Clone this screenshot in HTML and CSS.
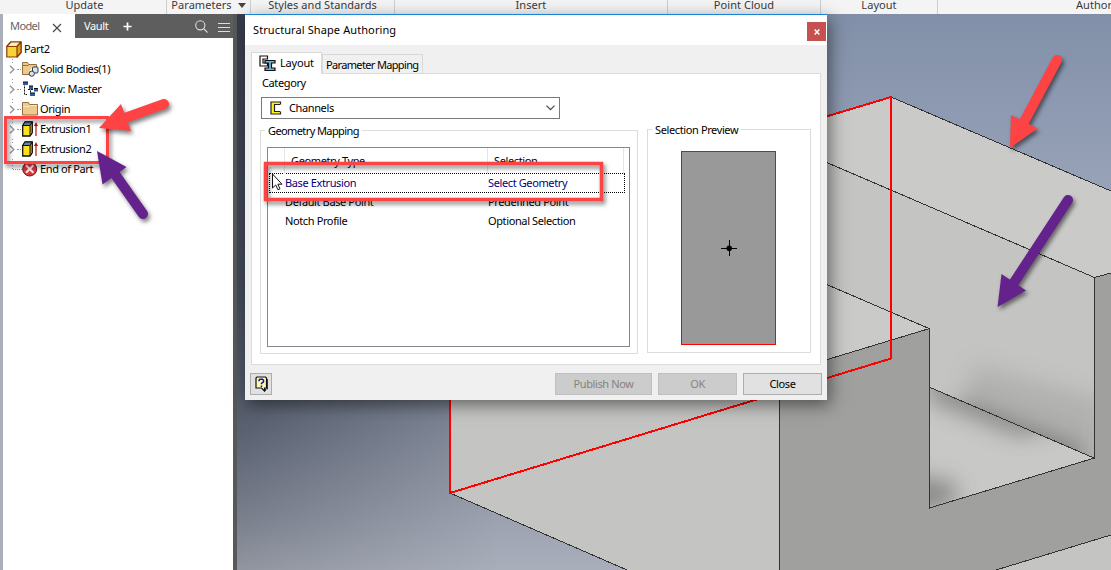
FILE: index.html
```html
<!DOCTYPE html>
<html lang="en">
<head>
    <meta charset="UTF-8">
    <meta name="viewport" content="width=device-width, initial-scale=1.0">
    <title>Structural Shape Authoring</title>
    <link rel="stylesheet" href="styles.css">
</head>
<body>
    <div class="ribbon">
        <div class="panel update">Update</div>
        <div class="panel parameters">Parameters <span class="caret"></span></div>
        <div class="panel styles">Styles and Standards</div>
        <div class="panel insert">Insert</div>
        <div class="panel cloud">Point Cloud</div>
        <div class="panel layout">Layout</div>
        <div class="panel author">Author</div>
    </div>

    <div class="main">
        <div class="browser">
            <div class="browser-tabs">
                <div class="browser-tab active">
                    <span>Model</span>
                    <svg width="10" height="10" viewBox="0 0 10 10"><path d="M1 1l8 8M9 1l-8 8" stroke="#444" stroke-width="1.1"/></svg>
                </div>
                <div class="browser-tab">Vault</div>
                <svg class="plus" width="9" height="9" viewBox="0 0 9 9"><path d="M4.5 0.5v8M0.5 4.5h8" stroke="#fff" stroke-width="1.7"/></svg>
                <svg class="search" width="13" height="13" viewBox="0 0 13 13" fill="none" stroke="#ddd" stroke-width="1.1"><circle cx="5.3" cy="5.3" r="4.6"/><path d="M8.7 8.7l3.8 3.8"/></svg>
                <svg class="menu" width="13" height="11" viewBox="0 0 13 11"><path d="M0 1.5h12M0 5.5h12M0 9.5h12" stroke="#ddd"/></svg>
            </div>
            <ul class="tree">
                <li class="root">
                    <svg width="16" height="17" viewBox="0 0 16 17" stroke="#8a3a08" stroke-width="1.2" stroke-linejoin="round">
                        <path d="M0.8 5.5L4.8 1H15v10.5l-4 4.5H0.8z" fill="#f6d437"/>
                        <path d="M0.8 5.5L4.8 1H15l-4 4.5z" fill="#fff3b0"/>
                        <path d="M11 5.5L15 1v10.5L11 16z" fill="#e0a41c"/>
                    </svg>
                    <span>Part2</span>
                </li>
                <li>
                    <svg class="chevron" width="6" height="9" viewBox="0 0 6 9"><path d="M1 0.7l3.8 3.8L1 8.3"/></svg><i></i>
                    <svg width="17" height="16" viewBox="0 0 17 16">
                        <path d="M0.5 13.5V1.5h5l1 2h8v10z" fill="#ecc98d" stroke="#93713c"/>
                        <path d="M0.5 4.5h6" stroke="#93713c"/>
                        <path d="M9 8l2-2h5.5v6l-2 2h-4l-2 1.5-1-2v-3z" fill="#fff"/>
                        <rect x="10.5" y="6" width="5.5" height="6" rx="1" fill="#d6e3f0" stroke="#333c4a"/>
                        <circle cx="9.8" cy="12.7" r="2.6" fill="#d6e3f0" stroke="#333c4a"/>
                    </svg>
                    <span>Solid Bodies(1)</span>
                </li>
                <li>
                    <svg class="chevron" width="6" height="9" viewBox="0 0 6 9"><path d="M1 0.7l3.8 3.8L1 8.3"/></svg><i></i>
                    <svg width="17" height="16" viewBox="0 0 17 16">
                        <path d="M5.5 2.5H2.5v11H5M8.5 6.5v7M6 8.5h7" fill="none" stroke="#111" stroke-dasharray="2 1"/>
                        <path d="M1 1h5v3H1zM7 5h4v3H7zM12 7.5h4v3h-4zM8 12h5v3H8z" fill="#2c5d94"/>
                        <path d="M1 1h5M7 5h4M12 7.5h4M8 12h5" stroke="#111"/>
                    </svg>
                    <span>View: Master</span>
                </li>
                <li>
                    <svg class="chevron" width="6" height="9" viewBox="0 0 6 9"><path d="M1 0.7l3.8 3.8L1 8.3"/></svg><i></i>
                    <svg width="17" height="16" viewBox="0 0 17 16">
                        <path d="M0.5 14V1.5h6l1 2h8V14z" fill="#edcb90" stroke="#93713c"/>
                        <path d="M1 5.5h6l1-1h7" fill="none" stroke="#fae8c4"/>
                    </svg>
                    <span>Origin</span>
                </li>
                <li>
                    <svg class="chevron" width="6" height="9" viewBox="0 0 6 9"><path d="M1 0.7l3.8 3.8L1 8.3"/></svg><i></i>
                    <svg width="17" height="16" viewBox="0 0 17 16">
                        <path d="M0.7 4.5L3 1h7.3v10.5L8 15H0.7z" fill="#ffe01f" stroke="#111" stroke-width="1.3"/>
                        <path d="M0.7 4.5L3 1h7.3L8 4.5z" fill="#5f86ad" stroke="#111"/>
                        <path d="M8 4.5L10.3 1v10.5L8 15z" fill="#c79d10" stroke="#111"/>
                        <path d="M14 15V3" stroke="#b80d10" stroke-width="1.2"/><path d="M12 5l2-4 2 4z" fill="#b80d10"/>
                    </svg>
                    <span>Extrusion1</span>
                </li>
                <li>
                    <svg class="chevron" width="6" height="9" viewBox="0 0 6 9"><path d="M1 0.7l3.8 3.8L1 8.3"/></svg><i></i>
                    <svg width="17" height="16" viewBox="0 0 17 16">
                        <path d="M0.7 4.5L3 1h7.3v10.5L8 15H0.7z" fill="#ffe01f" stroke="#111" stroke-width="1.3"/>
                        <path d="M0.7 4.5L3 1h7.3L8 4.5z" fill="#5f86ad" stroke="#111"/>
                        <path d="M8 4.5L10.3 1v10.5L8 15z" fill="#c79d10" stroke="#111"/>
                        <path d="M14 15V3" stroke="#b80d10" stroke-width="1.2"/><path d="M12 5l2-4 2 4z" fill="#b80d10"/>
                    </svg>
                    <span>Extrusion2</span>
                </li>
                <li class="last">
                    <i></i>
                    <svg width="17" height="16" viewBox="0 0 17 16">
                        <circle cx="7.7" cy="8" r="7" fill="#d8343a" stroke="#6d1a1c"/>
                        <path d="M4 4.3l7.4 7.4M11.4 4.3L4 11.7" stroke="#fbe6e6" stroke-width="2.2"/>
                    </svg>
                    <span>End of Part</span>
                </li>
            </ul>
        </div>

        <svg class="scene" width="874" height="556" viewBox="237 14 874 556">
            <defs>
                <linearGradient id="sky" x1="0" y1="0" x2="0" y2="1">
                    <stop offset="0" stop-color="#8190a8"/>
                    <stop offset="0.33" stop-color="#99a3b9"/>
                    <stop offset="0.7" stop-color="#808796"/>
                    <stop offset="1" stop-color="#a9aebb"/>
                </linearGradient>
                <linearGradient id="skyLeft" x1="0" y1="0" x2="0" y2="1">
                    <stop offset="0" stop-color="#363c4a"/>
                    <stop offset="0.5" stop-color="#434a58"/>
                    <stop offset="0.75" stop-color="#596070"/>
                    <stop offset="0.9" stop-color="#777d8a"/>
                    <stop offset="1" stop-color="#90959f"/>
                </linearGradient>
                <linearGradient id="fade" x1="0" y1="0" x2="1" y2="0">
                    <stop offset="0" stop-color="#fff"/>
                    <stop offset="1" stop-color="#000"/>
                </linearGradient>
                <mask id="leftMask"><rect x="237" y="14" width="260" height="556" fill="url(#fade)"/></mask>
                <clipPath id="wall"><path d="M929 200L1094 277V458L929 387z"/></clipPath>
                <clipPath id="floor"><path d="M929 387L1094 458L929 508z"/></clipPath>
                <filter id="soft" x="-50%" y="-100%" width="200%" height="300%"><feGaussianBlur stdDeviation="11"/></filter>
            </defs>
            <rect x="237" y="14" width="874" height="556" fill="url(#sky)"/>
            <rect x="237" y="14" width="260" height="556" fill="url(#skyLeft)" mask="url(#leftMask)"/>

            <!-- side and top faces -->
            <path d="M450 230L891 97L1111 191V570H627L450 493z" fill="#c4c4c2"/>
            <path d="M779 131L891 97L1111 191V273L1094 277.5L779 142z" fill="#cacac8"/>
            <path d="M779 264L929 328.5L779 374z" fill="#cacac8"/>

            <!-- slot -->
            <g clip-path="url(#wall)">
                <path d="M975 365L1105 400V480H1060L955 420z" fill="#8e8e8c" opacity="0.35" filter="url(#soft)"/>
                <path d="M960 401L1080 446V485L960 430z" fill="#747472" opacity="0.8" filter="url(#soft)"/>
            </g>
            <g clip-path="url(#floor)">
                <path d="M929 387L1094 458L929 508z" fill="#c8c8c6"/>
                <path d="M929 372L1060 425L1020 436L929 400z" fill="#7a7a78" opacity="0.8" filter="url(#soft)"/>
                <ellipse cx="928" cy="494" rx="30" ry="15" fill="#737371" opacity="0.8" filter="url(#soft)"/>
            </g>

            <!-- front face -->
            <path d="M779.5 374L929.5 328.5V508L1094.5 458V277.5L1111 273V535L996 570H779.5z" fill="#a0a09e"/>
            <g fill="none" stroke="#333" shape-rendering="crispEdges">
                <path d="M891 97L1111 191M779 142L1094.5 277.5L1111 273M779 264L929 328.5"/>
                <path d="M779.5 570V374L929.5 328.5V508L1094.5 458V277.5M929 387L1094 458"/>
                <path d="M1111 535L996 570M450 493L627 570"/>
            </g>
            <path d="M450 493V230L891 97V358.5z" fill="none" stroke="#fe0000" stroke-width="2" shape-rendering="crispEdges"/>
        </svg>
    </div>

    <div class="dialog">
        <div class="titlebar">
            <span>Structural Shape Authoring</span>
            <button class="close-x"><svg width="6" height="6" viewBox="0 0 6 6"><path d="M0.7 0.5l4.6 5M5.3 0.5l-4.6 5" stroke="#fff" stroke-width="1.5"/></svg></button>
        </div>
        <div class="tabs">
            <div class="tab active">
                <svg width="17" height="17" viewBox="0 0 17 17">
                    <path d="M8.5 1H1v10h7.5V8H4V4h4.5z" fill="#fff" stroke="#111" stroke-width="1.2"/>
                    <path d="M6 5.5h10v2.5h-3.5v5H16v2.5H6V13h3.5V8H6z" fill="#6db5e8" stroke="#111" stroke-width="1.2"/>
                </svg>
                <span>Layout</span>
            </div>
            <div class="tab mapping">Parameter Mapping</div>
        </div>
        <div class="page">
            <div class="category">Category</div>
            <div class="combo">
                <svg width="12" height="14" viewBox="0 0 12 14"><path d="M10.5 3.5V1H1v12h9.5v-2.5H4.5v-7z" fill="#fff21f"/><path d="M10.5 3.5V1H1v12h9.5v-2.5M10 3.5H4.5v7H10" fill="none" stroke="#222" stroke-width="1.2"/></svg>
                <span>Channels</span>
                <svg class="down" width="9" height="6" viewBox="0 0 9 6"><path d="M0.5 0.7l4 4 4-4" fill="none" stroke="#444" stroke-width="1.2"/></svg>
            </div>
            <div class="groups">
                <div class="group geometry">
                    <div class="legend">Geometry Mapping</div>
                    <div class="list">
                        <div class="row head"><span></span><span>Geometry Type</span><span>Selection</span></div>
                        <div class="row selected"><span></span><span>Base Extrusion</span><span>Select Geometry</span></div>
                        <div class="row"><span></span><span>Default Base Point</span><span>Predefined Point</span></div>
                        <div class="row"><span></span><span>Notch Profile</span><span>Optional Selection</span></div>
                    </div>
                </div>
                <div class="group preview">
                    <div class="legend">Selection Preview</div>
                    <div class="shape">
                        <svg width="17" height="17" viewBox="0 0 17 17"><path d="M8.5 0v16M0 8.5h16" stroke="#000"/><circle cx="8.2" cy="8.3" r="2.8"/></svg>
                    </div>
                </div>
            </div>
        </div>
        <div class="buttons">
            <button class="help"><svg width="13" height="16" viewBox="0 0 13 16"><path d="M2 1h8.5l1 1v10H9.5v3l-3-3H1V2z" fill="#fffbb0" stroke="#111" stroke-width="1.2"/><path d="M12.5 3v10h-2v2" fill="none" stroke="#111" stroke-width="0.8"/><path d="M4 5.3V4.2L5 3.2h2.5l1 1v1.6L6.5 7.3v1M6.5 9.4v1.5" fill="none" stroke="#10109a" stroke-width="1.5"/></svg></button>
            <button class="btn publish" disabled>Publish Now</button>
            <button class="btn ok" disabled>OK</button>
            <button class="btn close">Close</button>
        </div>
    </div>

    <!-- callouts drawn over the whole window -->
    <svg class="callouts" width="1111" height="570" viewBox="0 0 1111 570">
        <path d="M272.500 174v14l3.200-3 2.300 4.800 2-1-2.200-4.600h4.200z" fill="#fff" stroke="#111"/>
        <g class="red">
            <rect x="265.5" y="163.5" width="336" height="36" fill="none" stroke-width="3.5"/>
            <rect x="5.5" y="117.5" width="102" height="45" fill="none" stroke-width="3"/>
        </g>
        <g class="red arrow">
            <path d="M164 104L122 119"/><path class="tip" d="M99 128L121 104L131 131z"/>
        </g>
        <g class="purple arrow">
            <path d="M143 214L112 170"/><path class="tip" d="M97 151L126.500 167L102.500 184.500z"/>
        </g>
        <g class="red arrow">
            <path d="M1057 60L1024 122"/><path class="tip" d="M1010 148L1011 115L1037.500 128.500z"/>
        </g>
        <g class="purple arrow">
            <path d="M1068 200L1013 284"/><path class="tip" d="M997.500 307L1001.500 274L1026 290.500z"/>
        </g>
    </svg>
</body>
</html>
```
FILE: styles.css
```css
* {
    box-sizing: border-box;
}
body {
    margin: 0;
    width: 1111px;
    height: 570px;
    overflow: hidden;
    position: relative;
    font-family: "Noto Sans", "Open Sans", sans-serif;
    font-size: 11px;
    line-height: 14px;
    letter-spacing: -0.38px;
    color: #000;
}
svg {
    display: block;
    flex: none;
}
button {
    font: inherit;
    letter-spacing: inherit;
    padding: 0;
}

/* ribbon */
.ribbon {
    display: flex;
    height: 14px;
    padding-left: 3px;
    background: #f4f4f5;
    color: #3a3a3a;
    line-height: 10px;
    letter-spacing: 0.05px;
    white-space: nowrap;
}
.panel {
    flex: none;
    text-align: center;
    border-right: 1px solid #cfcfcf;
}
.update { width: 164px; }
.parameters {
    display: flex;
    align-items: center;
    justify-content: center;
    width: 84px;
    height: 14px;
    padding-bottom: 4px;
    gap: 6px;
}
.caret {
    border: 4px solid transparent;
    border-top: 5px solid #444;
    border-bottom: 0;
}
.styles { width: 144px; }
.insert { width: 273px; }
.cloud { width: 153px; }
.layout { width: 117px; }
.author {
    width: 173px;
    text-align: left;
    padding-left: 138px;
    border-right: 0;
}

.main {
    display: flex;
    height: 556px;
}

/* model browser */
.browser {
    width: 237px;
    background: #fff;
    border-left: 3px solid #a9aeb8;
    border-right: 4px solid #585858;
}
.browser-tabs {
    display: flex;
    align-items: center;
    height: 24px;
    background: #5e5e5e;
    color: #fff;
}
.browser-tab {
    padding-left: 9px;
}
.browser-tab.active {
    display: flex;
    align-items: center;
    gap: 13px;
    width: 72px;
    height: 24px;
    padding-left: 7px;
    background: #fff;
    color: #666;
    letter-spacing: -0.6px;
}
.browser-tab.active svg {
    margin-top: 4px;
}
.plus {
    margin-left: 15px;
}
.search {
    margin-left: auto;
}
.menu {
    margin: 2px 2px 0 10px;
}
.tree {
    list-style: none;
    margin: 0;
    padding: 1px 0 0 6px;
}
.tree li {
    display: flex;
    align-items: center;
    height: 20px;
    background: repeating-linear-gradient(#999 0 1px, #fff 1px 3px) 3px 0 / 1px 6px no-repeat;
}
.tree li.root {
    background: none;
    margin-left: -3px;
    gap: 2px;
}
.tree li.last {
    background-size: 1px 11px;
}
.tree i {
    width: 4px;
    margin: 0 1px 0 2px;
    border-top: 1px dotted #999;
}
.tree li.last i {
    width: 9px;
    margin: 0 0 0 4px;
}
.tree li:not(.root) > svg:not(.chevron) {
    margin-right: 1px;
}
.chevron {
    fill: none;
    stroke: #999;
    stroke-width: 1.5;
}

/* dialog */
.dialog {
    position: absolute;
    left: 245px;
    top: 14px;
    width: 582px;
    height: 386px;
    background: #f0f0f0;
    border-top: 1px solid #1883d7;
    box-shadow: 3px 5px 16px rgba(0, 0, 0, 0.5);
}
.titlebar {
    display: flex;
    justify-content: space-between;
    height: 30px;
    padding: 7px 1px 0 8px;
    background: #fff;
    line-height: 16px;
    letter-spacing: 0.1px;
}
.close-x {
    display: flex;
    align-items: center;
    justify-content: center;
    width: 19px;
    height: 19px;
    border: 0;
    background: #c75050;
}
.tabs {
    display: flex;
    align-items: flex-end;
    height: 28px;
    padding-left: 6px;
}
.tab {
    display: flex;
    align-items: center;
    height: 19px;
    border: 1px solid #d9d9d9;
    border-bottom: 0;
    padding-left: 3px;
    white-space: nowrap;
}
.tab.active {
    width: 71px;
    height: 22px;
    margin-bottom: -1px;
    padding: 0 0 1px 7px;
    gap: 4px;
    background: #fff;
    position: relative;
    letter-spacing: -0.2px;
}
.tab.mapping {
    width: 101px;
    padding-top: 1px;
    letter-spacing: -0.65px;
}
.page {
    width: 570px;
    height: 292px;
    margin-left: 6px;
    padding: 2px 0 0 9px;
    background: #fff;
    border: 1px solid #dcdcdc;
}
.category {
    padding-left: 1px;
}
.combo {
    display: flex;
    align-items: center;
    width: 299px;
    height: 22px;
    margin-top: 7px;
    padding: 0 4px 0 8px;
    border: 1px solid #7a7a7a;
}
.combo span {
    margin-left: 7px;
}
.down {
    margin-left: auto;
}
.groups {
    display: flex;
    gap: 9px;
    margin: 10px 0 0 -1px;
}
.group {
    border: 1px solid #dcdcdc;
}
.geometry {
    width: 378px;
    height: 224px;
    margin-top: 1px;
    padding: 0 7px 0 6px;
}
.preview {
    width: 164px;
    height: 224px;
}
.legend {
    width: max-content;
    margin-top: -7px;
    margin-left: -2px;
    padding: 0 3px;
    background: #fff;
}
.geometry .legend {
    letter-spacing: -0.6px;
}
.preview .legend {
    margin-left: 4px;
}
.list {
    width: 363px;
    height: 200px;
    margin-top: 9px;
    border: 1px solid #828790;
    padding: 0 5px 0 1px;
}
.row {
    display: grid;
    grid-template-columns: 16px 203px 1fr;
    height: 19px;
    line-height: 17px;
}
.row.head {
    height: 25px;
    line-height: 26px;
}
.row.head span {
    border-right: 1px solid #e5e5e5;
}
.row.head span + span {
    padding-left: 6px;
}
.row.selected {
    height: 20px;
    line-height: 18px;
    margin-right: -1px;
    border: 1px dotted #000;
    grid-template-columns: 15px 203px 1fr;
    color: #00007f;
}
.shape {
    display: flex;
    align-items: center;
    justify-content: center;
    width: 95px;
    height: 194px;
    margin: 14px 0 0 33px;
    padding-left: 1px;
    background: #999;
    border: 1px solid #f00;
}
.buttons {
    display: flex;
    height: 22px;
    margin-top: 8px;
    padding: 0 5px;
}
.btn {
    height: 22px;
    border: 1px solid #adadad;
    background: #e1e1e1;
    color: #000;
}
.btn:disabled {
    border-color: #bfbfbf;
    background: #ccc;
    color: #838383;
}
.help {
    display: flex;
    align-items: center;
    justify-content: center;
    width: 22px;
    border: 1px solid #adadad;
    background: #e1e1e1;
}
.publish {
    width: 97px;
    margin-left: auto;
}
.ok, .close {
    width: 79px;
    margin-left: 6px;
}

/* callouts */
.callouts {
    position: absolute;
    left: 0;
    top: 0;
}
.red, .purple {
    stroke: #fd4343;
    filter: drop-shadow(2px 3px 2px rgba(0, 0, 0, 0.5));
}
.purple {
    stroke: #64228c;
}
.arrow {
    fill: none;
    stroke-width: 10;
    stroke-linecap: round;
}
.tip {
    fill: #fd4343;
    stroke: none;
}
.purple .tip {
    fill: #64228c;
}
```
